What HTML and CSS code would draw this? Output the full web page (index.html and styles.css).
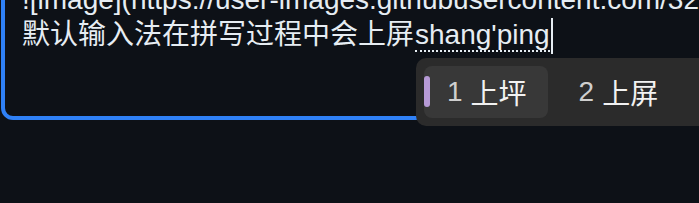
FILE: index.html
```html
<!doctype html>
<html>
    <head>
        <title>IME composition</title>
        <link rel="stylesheet" href="styles.css">
    </head>
    <body>
        <div class="editor">
            <div class="line">![image](https://user-images.githubusercontent.com/32418376/2024-ime-candidate.png)</div>
            <div class="line">默认输入法在拼写过程中会上屏<span class="compose">shang'ping</span><span class="caret"></span></div>
        </div>

        <div class="candidates">
            <div class="cand active">
                <span class="mark"></span>
                <span class="num">1</span> 上坪
            </div>
            <div class="cand">
                <span class="num">2</span> 上屏
            </div>
        </div>
    </body>
</html>
```

FILE: styles.css
```css
html, body{
    margin: 0;
    height: 100%;
    overflow: hidden;
}
body{
    background: #0d1117;
    color: #e6edf3;
    font-family: 'Liberation Sans', 'Noto Sans CJK SC', sans-serif;
    position: relative;
}

/* text box */
.editor{
    width: 900px;
    margin: -40px 0 0 1px;
    border: 4px solid #2f81f7;
    border-radius: 12px;
    padding: 18px 0 62px 17px;
    font-size: 28px;
    line-height: 35px;
}
.line{
    white-space: nowrap;
}
.compose{
    border-bottom: 2px dotted #e6edf3;
    margin-left: 1px;
    line-height: 1;
}
.caret{
    display: inline-block;
    width: 2px;
    height: 36px;
    background: #e6edf3;
    vertical-align: -10px;
    margin-left: 1px;
}

/* candidate window */
.candidates{
    position: absolute;
    left: 416px;
    top: 58px;
    width: 320px;
    height: 68px;
    box-sizing: border-box;
    background: #2b2b2b;
    border-radius: 10px;
    padding: 8px;
    display: flex;
    align-items: stretch;
    gap: 8px;
    font-size: 28px;
    color: #f2f2f2;
}
.cand{
    display: flex;
    align-items: center;
    gap: 8px;
    padding: 0 21px 0 23px;
    border-radius: 8px;
    position: relative;
}
.cand.active{
    background: #383838;
}
.num{
    color: #cfcfcf;
}
.mark{
    position: absolute;
    left: 0;
    top: 10px;
    width: 6px;
    height: 31px;
    border-radius: 3px;
    background: #b69ad6;
}
```
